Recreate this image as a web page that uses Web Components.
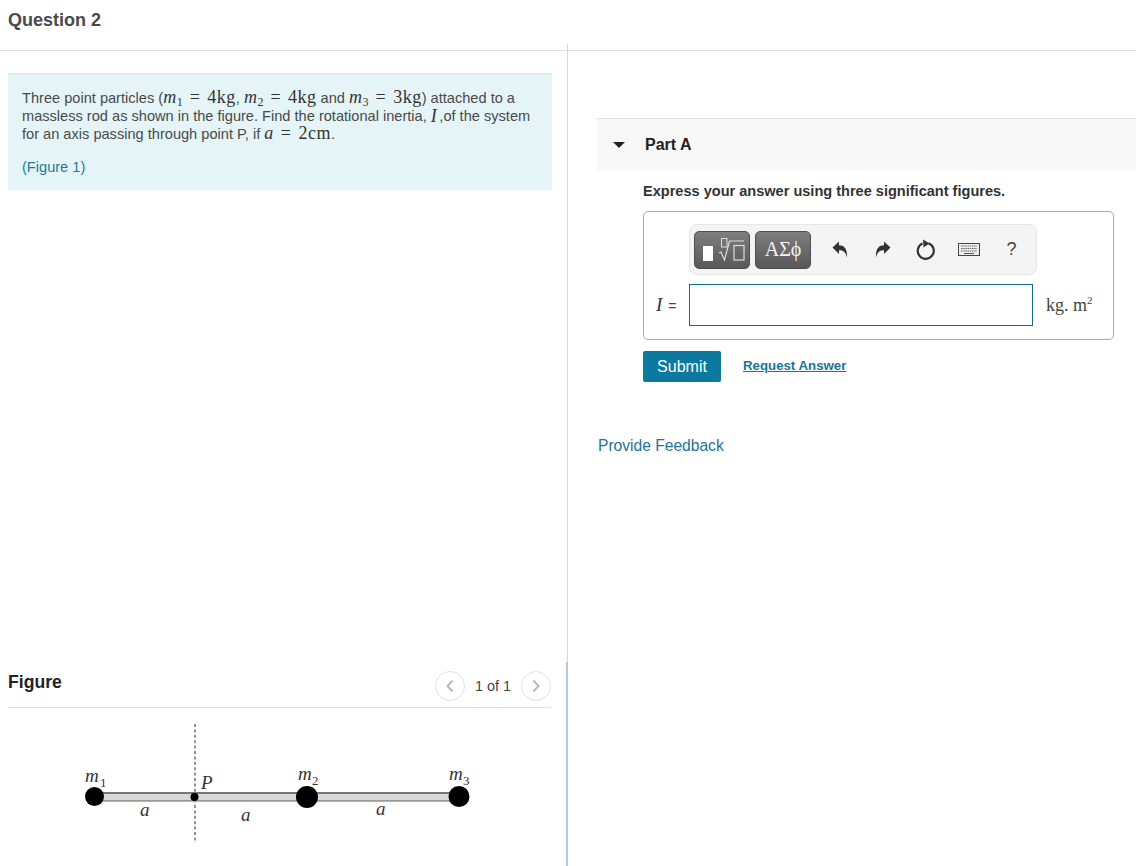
<!DOCTYPE html>
<html>
<head>
<meta charset="utf-8">
<title>Question 2</title>
<style>
  html, body { margin: 0; padding: 0; background: #fff; }
  body { font-family: "Liberation Sans", Arial, sans-serif; color: #333; }
</style>
</head>
<body>
<quiz-page>
  <q-header slot="header">Question 2</q-header>
  <q-problem slot="left"></q-problem>
  <q-figure slot="left"></q-figure>
  <q-part slot="right"></q-part>
</quiz-page>

<script>
class QuizPage extends HTMLElement {
  constructor() {
    super();
    this.attachShadow({ mode: 'open' });
    this.shadowRoot.innerHTML = `
      <style>
        :host { display: block; position: relative; width: 1136px; height: 866px; overflow: hidden; }
        .main { display: grid; grid-template-columns: 568px 1fr; height: 815px; }
        .left { display: flex; flex-direction: column; justify-content: space-between; border-right: 1px solid #c9dde4; box-sizing: border-box; height: 815px; }
        .right { padding: 67px 0 0 29px; min-width: 0; }
        /* the divider pokes a little above the header rule */
        .tick { position: absolute; left: 567px; top: 44px; width: 1px; height: 7px; background: #c9dde4; }
      </style>
      <slot name="header"></slot>
      <div class="main">
        <div class="left"><slot name="left"></slot></div>
        <div class="right"><slot name="right"></slot></div>
      </div>
      <div class="tick"></div>
    `;
  }
}

class QHeader extends HTMLElement {
  constructor() {
    super();
    this.attachShadow({ mode: 'open' });
    this.shadowRoot.innerHTML = `
      <style>
        :host { display: flex; align-items: center; box-sizing: border-box; height: 51px; padding: 0 8px 10px; border-bottom: 1px solid #dcdfe3; font-size: 18px; font-weight: bold; color: #4a4a4a; }
      </style>
      <slot></slot>
    `;
  }
}

class QProblem extends HTMLElement {
  constructor() {
    super();
    this.attachShadow({ mode: 'open' });
    this.shadowRoot.innerHTML = `
      <style>
        :host { display: block; box-sizing: border-box; width: 544px; height: 117px; margin: 22px 0 0 8px; padding: 15px 14px 0; background: #e5f5f7; border-top: 1px solid #d8e6e8; font-size: 14.6px; line-height: 18px; color: #4a4a4a; }
        p { margin: 0; white-space: nowrap; }
        .link { margin-top: 15px; color: #1c7b96; }
        .m { font-family: "Liberation Serif", serif; font-size: 18px; line-height: 0; color: #333; letter-spacing: 0.5px; word-spacing: 2px; }
        sub { font-size: 12px; line-height: 0; vertical-align: -3px; font-family: "Liberation Serif", serif; color: #333; }
        .big { vertical-align: -1px; margin-right: 2px; }
      </style>
      <p>Three point particles (<i class="m">m</i><sub>1</sub><span class="m"> = 4kg</span>, <i class="m">m</i><sub>2</sub><span class="m"> = 4kg</span> and <i class="m">m</i><sub>3</sub><span class="m"> = 3kg</span>) attached to a</p>
      <p>massless rod as shown in the figure. Find the rotational inertia, <i class="m big">I</i>,of the system</p>
      <p>for an axis passing through point P, if <i class="m">a</i><span class="m"> = 2cm</span>.</p>
      <p class="link">(Figure 1)</p>
    `;
  }
}

class QFigure extends HTMLElement {
  constructor() {
    super();
    this.attachShadow({ mode: 'open' });
    this.shadowRoot.innerHTML = `
      <style>
        :host { display: block; box-sizing: border-box; height: 204px; margin-right: -1px; padding: 8px 0 0 8px; border-right: 2px solid #b7cadc; }
        .head { display: flex; align-items: center; justify-content: space-between; width: 543px; height: 38px; border-bottom: 1px solid #dfe2e5; box-sizing: border-box; }
        h2 { margin: 0 0 12px; font-size: 17.6px; font-weight: bold; color: #222; }
        .pager { display: flex; align-items: center; gap: 10px; margin-bottom: 6px; font-size: 14.4px; color: #444; }
        .round { display: flex; align-items: center; justify-content: center; width: 30px; height: 30px; box-sizing: border-box; border: 1px solid #e2e2e2; border-radius: 50%; }
        svg.diagram { display: block; margin-left: -8px; }
        .lbl { font-family: "Liberation Serif", serif; font-style: italic; fill: #333; }
      </style>
      <div class="head">
        <h2>Figure</h2>
        <div class="pager">
          <span class="round"><svg width="10" height="14" viewBox="0 0 10 14"><path d="M7.5 1.5 2.5 7l5 5.5" fill="none" stroke="#b9b9b9" stroke-width="2"/></svg></span>
          <span>1 of 1</span>
          <span class="round"><svg width="10" height="14" viewBox="0 0 10 14"><path d="M2.5 1.5 7.5 7l-5 5.5" fill="none" stroke="#b9b9b9" stroke-width="2"/></svg></span>
        </div>
      </div>
      <svg class="diagram" width="560" height="159" viewBox="0 708 560 159">
        <line x1="195" y1="724" x2="195" y2="843" stroke="#666" stroke-width="1.4" stroke-dasharray="3 2.4"/>
        <rect x="94" y="792" width="365" height="10" fill="#d9d9d9"/>
        <rect x="94" y="792" width="365" height="2" fill="#777"/>
        <rect x="94" y="800" width="365" height="1.6" fill="#999"/>
        <circle cx="94.5" cy="796.5" r="9.5" fill="#000"/>
        <circle cx="194.5" cy="797" r="4" fill="#000"/>
        <circle cx="307" cy="797" r="11" fill="#000"/>
        <circle cx="459" cy="796.5" r="10.5" fill="#000"/>
        <text class="lbl" x="85" y="782" font-size="19">m</text>
        <text x="100" y="787" font-size="13" font-family="Liberation Serif, serif" fill="#333">1</text>
        <text class="lbl" x="201" y="789" font-size="19">P</text>
        <text class="lbl" x="298" y="780" font-size="19">m</text>
        <text x="312" y="785" font-size="13" font-family="Liberation Serif, serif" fill="#333">2</text>
        <text class="lbl" x="449" y="780" font-size="19">m</text>
        <text x="463" y="785" font-size="13" font-family="Liberation Serif, serif" fill="#333">3</text>
        <text class="lbl" x="140" y="816" font-size="19">a</text>
        <text class="lbl" x="241" y="821" font-size="19">a</text>
        <text class="lbl" x="376" y="815" font-size="19">a</text>
      </svg>
    `;
  }
}

class MathToolbar extends HTMLElement {
  constructor() {
    super();
    this.attachShadow({ mode: 'open' });
    this.shadowRoot.innerHTML = `
      <style>
        :host { display: flex; align-items: center; box-sizing: border-box; width: 348px; height: 51px; padding: 0 0 0 4px; background: #f4f4f4; border: 1px solid #e6e6e6; border-radius: 8px; }
        .btn { flex: none; display: flex; align-items: center; justify-content: center; box-sizing: border-box; width: 56px; height: 38px; margin-right: 5px; background: linear-gradient(#7e7e7e, #585858); border: 1px solid #4f4f4f; border-radius: 5px; color: #f2f2f2; }
        .greek { font-family: "Liberation Serif", serif; font-size: 20px; }
        .tools { display: flex; align-items: center; margin-left: 2px; }
        .tools span { display: flex; align-items: center; justify-content: center; width: 43px; }
        .q { font-size: 18px; color: #444; }
      </style>
      <div class="btn">
        <svg width="46" height="28" viewBox="0 0 46 28">
          <rect x="4" y="10" width="10" height="15" fill="#fff"/>
          <rect x="22.5" y="2.5" width="5.5" height="8.5" fill="none" stroke="#ddd"/>
          <path d="M20 17l2-1 3.5 8 5-19h14.5" fill="none" stroke="#ddd" stroke-width="1.2"/>
          <rect x="35" y="9.5" width="10" height="14.5" fill="none" stroke="#ddd" stroke-width="1.2"/>
        </svg>
      </div>
      <div class="btn greek">ΑΣϕ</div>
      <div class="tools">
        <span><svg width="16" height="17" viewBox="0 0 16 17"><path d="M0.5 6.5 7 0.5V4.2C12 4.2 15.5 7.5 15 16.5 13.8 11.5 11.5 9.3 7 9.3V13Z" fill="#333"/></svg></span>
        <span><svg width="16" height="17" viewBox="0 0 16 17"><path d="M15.5 6.5 9 0.5V4.2C4 4.2 0.5 7.5 1 16.5 2.2 11.5 4.5 9.3 9 9.3V13Z" fill="#333"/></svg></span>
        <span><svg width="20" height="21" viewBox="0 0 20 21"><path d="M12.5 4.3A8 8 0 1 1 6.5 4.5" fill="none" stroke="#333" stroke-width="2.2"/><path d="M7 0.5 13.5 4.5 7.5 8.5Z" fill="#333"/></svg></span>
        <span><svg width="22" height="13" viewBox="0 0 22 13"><rect x="0.5" y="0.5" width="21" height="12" fill="#eee" stroke="#444"/><path d="M3 3h16M3 5.5h16M3 8h16" stroke="#666" stroke-dasharray="1.5 0.7"/><path d="M6 10.5h10" stroke="#555"/></svg></span>
        <span class="q">?</span>
      </div>
    `;
  }
}

class AnswerBox extends HTMLElement {
  constructor() {
    super();
    this.attachShadow({ mode: 'open' });
    this.shadowRoot.innerHTML = `
      <style>
        :host { display: block; box-sizing: border-box; width: 471px; height: 129px; padding: 12px 0 0 45px; border: 1px solid #aaa; border-radius: 5px; }
        .row { display: flex; align-items: center; margin-top: 9px; margin-left: -33px; }
        .label { width: 33px; font-size: 14px; word-spacing: 2px; color: #444; white-space: nowrap; }
        .label i { font-family: "Liberation Serif", serif; font-size: 19px; color: #333; }
        .field { box-sizing: border-box; width: 344px; height: 42px; border: 1px solid #0f6f84; background: #fff; }
        .unit { margin-left: 13px; font-family: "Liberation Serif", serif; font-size: 18px; color: #444; }
        sup { font-size: 11px; line-height: 0; }
      </style>
      <math-toolbar></math-toolbar>
      <div class="row">
        <span class="label"><i>I</i> =</span>
        <div class="field"></div>
        <span class="unit">kg. m<sup>2</sup></span>
      </div>
    `;
  }
}

class QPart extends HTMLElement {
  constructor() {
    super();
    this.attachShadow({ mode: 'open' });
    this.shadowRoot.innerHTML = `
      <style>
        :host { display: block; }
        .bar { display: flex; align-items: center; box-sizing: border-box; height: 52px; padding: 1px 0 0 16px; background: #f8f8f8; border-top: 1px solid #e0e0e0; font-size: 16px; font-weight: bold; color: #222; }
        .bar svg { margin-right: 20px; }
        .body { padding: 13px 0 0 46px; }
        .hint { margin: 0 0 11px; font-size: 14.56px; line-height: 17px; font-weight: bold; color: #333; }
        .actions { display: flex; align-items: center; margin-top: 11px; }
        .submit { display: flex; align-items: center; justify-content: center; width: 78px; height: 31px; background: #0b7a9e; border-radius: 2px; color: #fff; font-size: 16px; }
        .req { margin: 0 0 2px 22px; font-size: 13.25px; font-weight: bold; color: #1b7596; text-decoration: underline; }
        .feedback { margin-top: 55px; font-size: 15.6px; line-height: 18px; color: #1b7596; padding-left: 1px; }
      </style>
      <div class="bar">
        <svg width="12" height="6" viewBox="0 0 12 6"><path d="M0 0h12L6 6Z" fill="#222"/></svg>
        <span>Part A</span>
      </div>
      <div class="body">
        <p class="hint">Express your answer using three significant figures.</p>
        <answer-box></answer-box>
        <div class="actions">
          <div class="submit">Submit</div>
          <a class="req">Request Answer</a>
        </div>
      </div>
      <div class="feedback">Provide Feedback</div>
    `;
  }
}

customElements.define('quiz-page', QuizPage);
customElements.define('q-header', QHeader);
customElements.define('q-problem', QProblem);
customElements.define('q-figure', QFigure);
customElements.define('math-toolbar', MathToolbar);
customElements.define('answer-box', AnswerBox);
customElements.define('q-part', QPart);
</script>
</body>
</html>
